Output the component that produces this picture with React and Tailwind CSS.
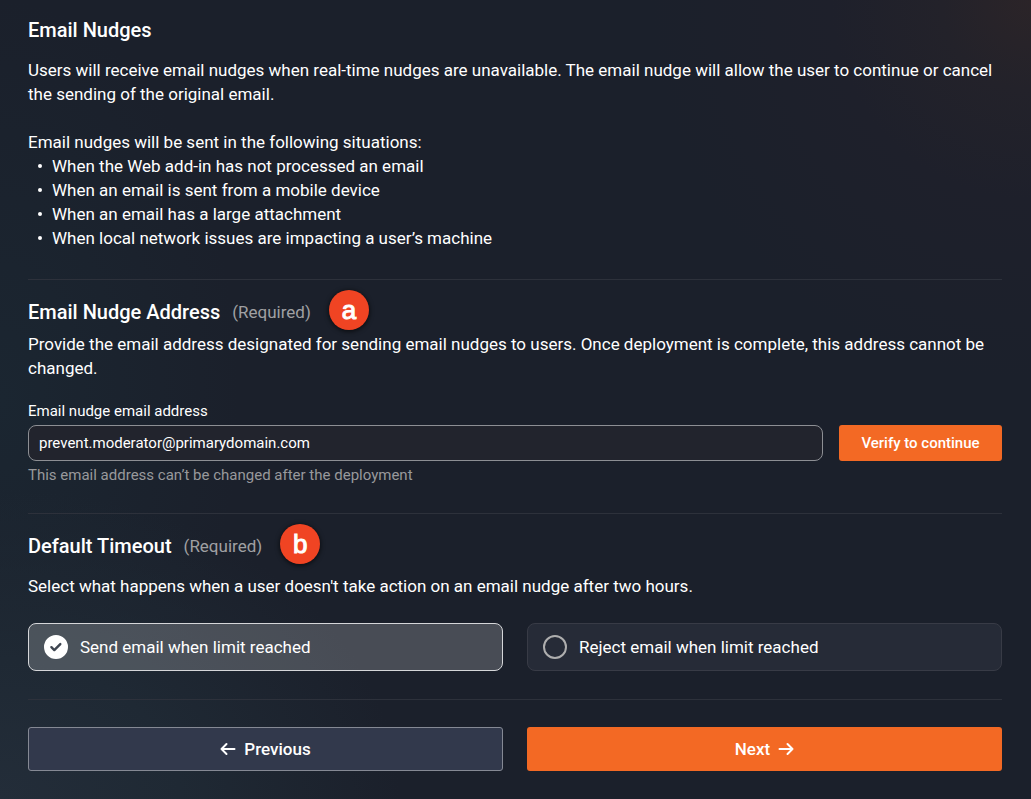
import { useState } from "react";

const situations = [
  "When the Web add-in has not processed an email",
  "When an email is sent from a mobile device",
  "When an email has a large attachment",
  "When local network issues are impacting a user’s machine",
];

const timeoutOptions = [
  { value: "send", label: "Send email when limit reached" },
  { value: "reject", label: "Reject email when limit reached" },
];

function Arrow({ flip = false }) {
  return (
    <svg
      viewBox="0 0 16 16"
      className={flip ? "size-4 rotate-180" : "size-4"}
      fill="none"
      stroke="currentColor"
      strokeWidth="2"
      strokeLinecap="round"
      strokeLinejoin="round"
      aria-hidden="true"
    >
      <path d="M1.5 8h13M9.5 3l5 5-5 5" />
    </svg>
  );
}

function Marker({ children }) {
  return (
    <span className="-mt-[10px] -mb-[6px] ml-[6px] flex size-10 items-center justify-center rounded-full bg-[#f04423] font-['Liberation_Sans',sans-serif] text-[26px] leading-10 text-white shadow-[0_1px_4px_1px_rgba(0,0,0,0.55)] [-webkit-text-stroke:1px_white]">
      {children}
    </span>
  );
}

function SectionTitle({ children, marker }) {
  return (
    <div className="flex items-center gap-3">
      <h2 className="text-xl leading-6 font-medium">{children}</h2>
      <span className="leading-6 text-[#a0a0a3]">(Required)</span>
      <Marker>{marker}</Marker>
    </div>
  );
}

function Option({ option, checked, onChange }) {
  return (
    <label
      className={
        checked
          ? "flex h-12 items-center gap-3 rounded-lg border border-[#d5d6d9] bg-white/20 px-[15px]"
          : "flex h-12 items-center gap-3 rounded-lg border border-[#383b46] bg-[#262b37] px-[15px]"
      }
    >
      <span className="grid size-6 place-items-center">
        <input
          type="radio"
          name="timeout"
          value={option.value}
          checked={checked}
          onChange={onChange}
          className="col-start-1 row-start-1 size-6 appearance-none rounded-full border-2 border-[#aeaeae] checked:border-white checked:bg-white"
        />
        {checked && (
          <svg
            viewBox="0 0 24 24"
            className="pointer-events-none col-start-1 row-start-1 size-6"
            fill="none"
            stroke="#3f4651"
            strokeWidth="2.4"
            strokeLinecap="round"
            strokeLinejoin="round"
            aria-hidden="true"
          >
            <path d="M7.4 12.2l2.9 2.9 6-6" />
          </svg>
        )}
      </span>
      <span>{option.label}</span>
    </label>
  );
}

export default function App() {
  const [email, setEmail] = useState("prevent.moderator@primarydomain.com");
  const [timeout, setTimeoutAction] = useState("send");

  return (
    <main className="min-h-screen border-b border-[#10141c] bg-[#1b202b] bg-[radial-gradient(circle_at_100%_0%,#2b2428_0px,#23222a_90px,#1e202b_200px,transparent_380px),radial-gradient(ellipse_at_0%_100%,#232d39_0px,#1f2934_180px,transparent_400px),radial-gradient(ellipse_240px_400px_at_0%_50%,#1b2631_0%,transparent_100%)] pt-[18px] pr-[29px] pb-7 pl-7 font-[Roboto,sans-serif] text-[17px] leading-6 text-white">
      <section className="border-b border-[#2d313b] pb-[29px]">
        <h2 className="text-xl leading-6 font-medium">Email Nudges</h2>
        <p className="mt-4">
          Users will receive email nudges when real-time nudges are unavailable. The email nudge will allow the user to
          continue or cancel the sending of the original email.
        </p>
        <p className="mt-6">Email nudges will be sent in the following situations:</p>
        <ul className="list-none">
          {situations.map((text) => (
            <li key={text} className="flex items-center gap-[10px] pl-[10px]">
              <span className="size-1 rounded-full bg-white" />
              {text}
            </li>
          ))}
        </ul>
      </section>

      <section className="border-b border-[#2d313b] pt-5 pb-7">
        <SectionTitle marker="a">Email Nudge Address</SectionTitle>
        <p className="mt-2">
          Provide the email address designated for sending email nudges to users. Once deployment is complete, this
          address cannot be changed.
        </p>
        <label htmlFor="nudge-email" className="mt-[21px] block text-[15px] leading-5">
          Email nudge email address
        </label>
        <div className="mt-1 flex gap-4">
          <input
            id="nudge-email"
            type="email"
            value={email}
            onChange={(e) => setEmail(e.target.value)}
            aria-describedby="nudge-email-help"
            className="h-9 min-w-0 flex-1 rounded-lg border border-[#8d8f94] bg-[#22242d] px-[10px] text-[15px] text-white"
          />
          <button type="button" className="h-9 w-[163px] rounded-[3px] bg-[#f36924] text-[15px] font-medium">
            Verify to continue
          </button>
        </div>
        <p id="nudge-email-help" className="mt-1 text-[15px] leading-5 text-[#98999c]">
          This email address can’t be changed after the deployment
        </p>
      </section>

      <section className="border-b border-[#2d313b] pt-5 pb-7">
        <SectionTitle marker="b">Default Timeout</SectionTitle>
        <p className="mt-4">Select what happens when a user doesn't take action on an email nudge after two hours.</p>
        <div className="mt-[25px] grid grid-cols-2 gap-6">
          {timeoutOptions.map((option) => (
            <Option
              key={option.value}
              option={option}
              checked={timeout === option.value}
              onChange={() => setTimeoutAction(option.value)}
            />
          ))}
        </div>
      </section>

      <div className="grid grid-cols-2 gap-6 pt-[27px]">
        <button
          type="button"
          className="flex h-11 items-center justify-center gap-2 rounded-[3px] border border-[#858994] bg-[#32394c] font-medium"
        >
          <Arrow flip />
          Previous
        </button>
        <button
          type="button"
          className="flex h-11 items-center justify-center gap-2 rounded-[3px] bg-[#f36924] font-medium"
        >
          Next
          <Arrow />
        </button>
      </div>
    </main>
  );
}
